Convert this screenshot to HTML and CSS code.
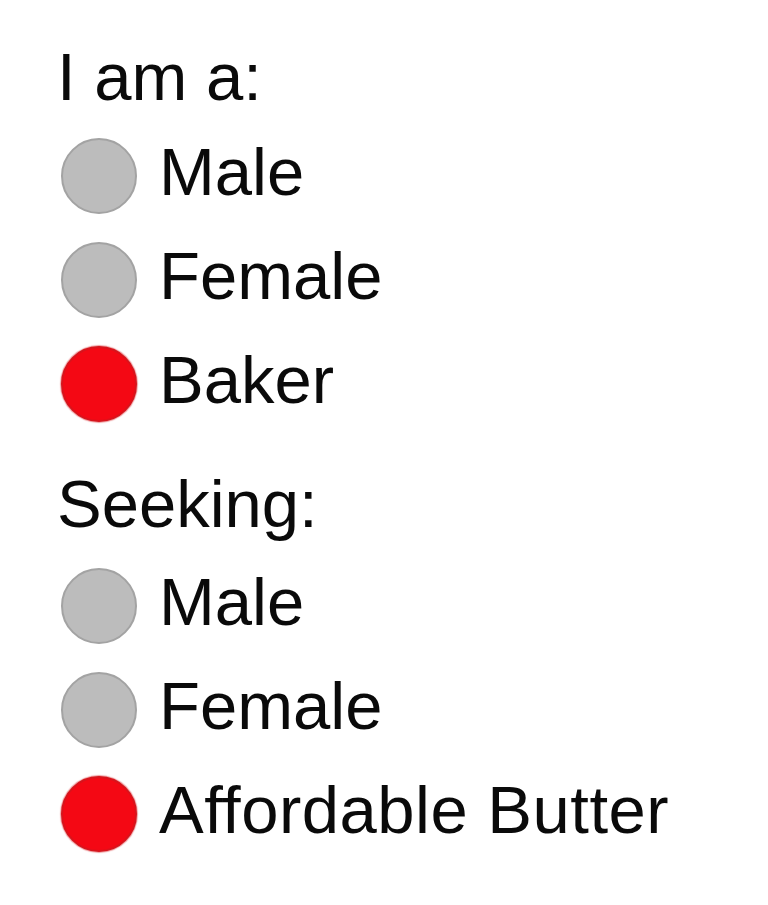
FILE: index.html
```html
<!DOCTYPE html>
<html>
<head>
<meta charset="utf-8">
<link rel="stylesheet" href="styles.css">
</head>
<body>
<div class="form">
  <div class="heading first">I am a:</div>
  <div class="option"><span class="radio"></span><span class="label">Male</span></div>
  <div class="option"><span class="radio"></span><span class="label">Female</span></div>
  <div class="option"><span class="radio checked"></span><span class="label">Baker</span></div>
  <div class="heading second">Seeking:</div>
  <div class="option"><span class="radio"></span><span class="label">Male</span></div>
  <div class="option"><span class="radio"></span><span class="label">Female</span></div>
  <div class="option"><span class="radio checked"></span><span class="label wide">Affordable Butter</span></div>
</div>
</body>
</html>
```
FILE: styles.css
```css
html, body {
  margin: 0;
  padding: 0;
  background: #ffffff;
}
body {
  width: 768px;
  height: 905px;
  overflow: hidden;
  font-family: "Liberation Sans", Arial, sans-serif;
  color: #0a0a0a;
}
.form {
  padding: 37px 0 0 57px;
  display: flex;
  flex-direction: column;
}
.heading {
  font-size: 67px;
  line-height: 80px;
  height: 80px;
  white-space: nowrap;
}
.heading.first {
  margin-bottom: 3px;
}
.heading.second {
  margin-top: 32px;
  margin-bottom: 6px;
}
.option {
  display: flex;
  align-items: flex-start;
  height: 104px;
}
.radio {
  flex: none;
  box-sizing: border-box;
  width: 76px;
  height: 76px;
  margin: 18px 0 0 4px;
  border-radius: 50%;
  background: #bcbcbc;
  border: 2px solid #a3a3a3;
}
.radio.checked {
  background: #f40814;
  border: 2px solid #d7141c;
  box-shadow: 0 0 1px 1px rgba(215, 40, 45, 0.45);
}
.label {
  font-size: 67px;
  line-height: 104px;
  margin-left: 22px;
  white-space: nowrap;
}
.label.wide {
  letter-spacing: 0.5px;
}
```
